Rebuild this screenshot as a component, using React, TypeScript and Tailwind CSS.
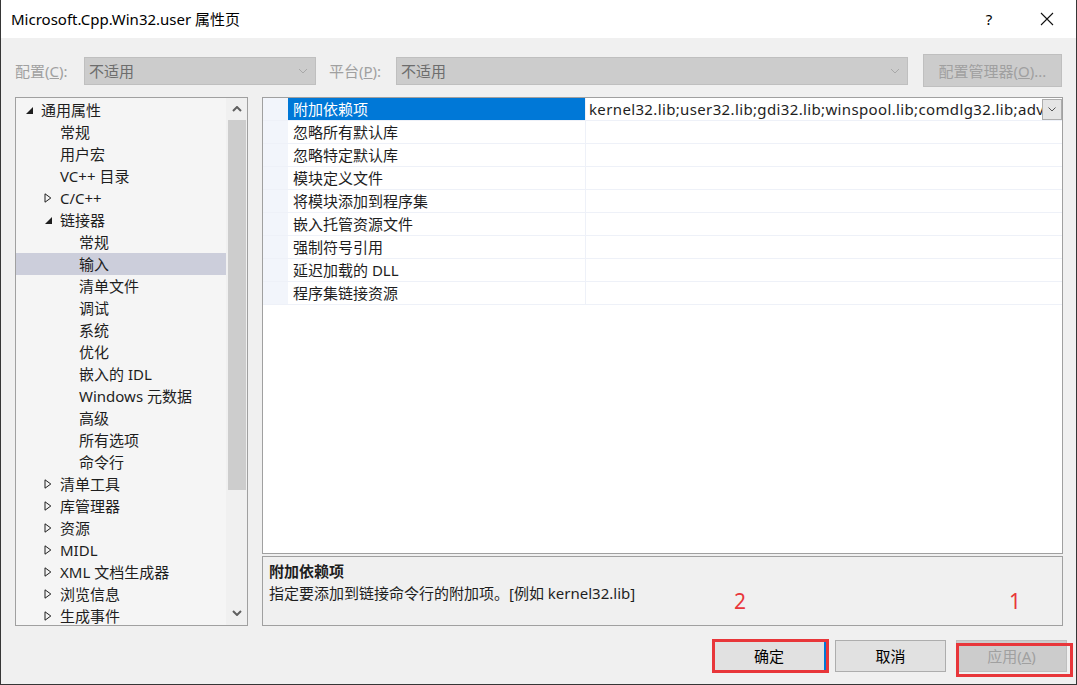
import React from "react";

type TreeItem = { label: string; level: number; arrow?: "open" | "closed"; selected?: boolean };

const treeItems: TreeItem[] = [
  { label: "通用属性", level: 0, arrow: "open" },
  { label: "常规", level: 1 },
  { label: "用户宏", level: 1 },
  { label: "VC++ 目录", level: 1 },
  { label: "C/C++", level: 1, arrow: "closed" },
  { label: "链接器", level: 1, arrow: "open" },
  { label: "常规", level: 2 },
  { label: "输入", level: 2, selected: true },
  { label: "清单文件", level: 2 },
  { label: "调试", level: 2 },
  { label: "系统", level: 2 },
  { label: "优化", level: 2 },
  { label: "嵌入的 IDL", level: 2 },
  { label: "Windows 元数据", level: 2 },
  { label: "高级", level: 2 },
  { label: "所有选项", level: 2 },
  { label: "命令行", level: 2 },
  { label: "清单工具", level: 1, arrow: "closed" },
  { label: "库管理器", level: 1, arrow: "closed" },
  { label: "资源", level: 1, arrow: "closed" },
  { label: "MIDL", level: 1, arrow: "closed" },
  { label: "XML 文档生成器", level: 1, arrow: "closed" },
  { label: "浏览信息", level: 1, arrow: "closed" },
  { label: "生成事件", level: 1, arrow: "closed" },
];

const props = [
  "附加依赖项",
  "忽略所有默认库",
  "忽略特定默认库",
  "模块定义文件",
  "将模块添加到程序集",
  "嵌入托管资源文件",
  "强制符号引用",
  "延迟加载的 DLL",
  "程序集链接资源",
];

const indent = ["pl-[9px]", "pl-[28px]", "pl-[47px]"];

function Chevron({ up, color = "#a8a8a8" }: { up?: boolean; color?: string }) {
  return (
    <svg width="10" height="6" viewBox="0 0 10 6">
      <polyline
        points={up ? "1,5 5,1 9,5" : "1,1 5,5 9,1"}
        fill="none"
        stroke={color}
        strokeWidth={up ? 2 : 1}
      />
    </svg>
  );
}

function Arrow({ kind }: { kind?: "open" | "closed" }) {
  if (kind === "open")
    return (
      <svg width="9" height="9" viewBox="0 0 9 9">
        <polygon points="8,1 8,8 1,8" fill="#1e1e1e" />
      </svg>
    );
  if (kind === "closed")
    return (
      <svg width="8" height="10" viewBox="0 0 8 10">
        <polygon points="1,0.8 6.8,5 1,9.2" fill="none" stroke="#1e1e1e" strokeWidth="1" />
      </svg>
    );
  return null;
}

function Combo({ width }: { width: string }) {
  return (
    <div className={`${width} h-[28px] bg-[#cccccc] border border-[#bfbfbf] flex items-center pl-[4px] pr-[7px] justify-between`}>
      <span className="text-[#6d6d6d]">不适用</span>
      <Chevron />
    </div>
  );
}

export default function App() {
  return (
    <div className="relative w-[1077px] h-[685px] bg-[#f0f0f0] border-l border-r border-b border-[#363636] text-[15px] leading-[22px] text-[#1e1e1e] font-['Noto_Sans','Noto_Sans_CJK_SC',sans-serif] overflow-hidden">
      {/* title bar */}
      <div className="h-[38px] bg-white flex items-center justify-between pl-[10px] pr-[6px]">
        <span className="text-black">Microsoft.Cpp.Win32.user 属性页</span>
        <div className="flex items-center gap-[12px]">
          <span className="w-[46px] text-center text-black">?</span>
          <span className="w-[46px] flex justify-center">
            <svg width="14" height="14" viewBox="0 0 14 14">
              <path d="M1 1 L13 13 M13 1 L1 13" stroke="#111" strokeWidth="1.1" />
            </svg>
          </span>
        </div>
      </div>

      <div className="pl-[14px]">
        {/* config row */}
        <div className="mt-[16px] h-[33px] flex items-center text-[#a0a0a0]">
          <span className="w-[69px]">
            配置(<span className="underline">C</span>):
          </span>
          <Combo width="w-[232px]" />
          <span className="ml-[13px] w-[67px]">
            平台(<span className="underline">P</span>):
          </span>
          <Combo width="w-[512px]" />
          <div className="ml-[15px] w-[139px] h-[33px] bg-[#cccccc] border border-[#bfbfbf] flex items-center justify-center">
            配置管理器(<span className="underline">O</span>)...
          </div>
        </div>

        {/* panels */}
        <div className="mt-[10px] flex gap-[14px]">
          {/* tree */}
          <div className="w-[233px] h-[529px] border border-[#a0a0a0] bg-[#f5f5f5] flex">
            <div className="flex-1 pt-[1px] overflow-hidden">
              {treeItems.map((it, i) => (
                <div
                  key={i}
                  className={`h-[22px] flex items-center whitespace-nowrap ${indent[it.level]} ${it.selected ? "bg-[#cccedb]" : ""}`}
                >
                  <span className="w-[16px] flex items-center">
                    <Arrow kind={it.arrow} />
                  </span>
                  <span>{it.label}</span>
                </div>
              ))}
            </div>
            <div className="w-[21px] bg-[#f0f0f0] flex flex-col items-center">
              <div className="h-[22px] flex items-center justify-center">
                <Chevron up color="#606060" />
              </div>
              <div className="w-[18px] h-[370px] bg-[#cdcdcd]" />
              <div className="flex-1" />
              <div className="h-[24px] flex items-center justify-center">
                <svg width="10" height="6" viewBox="0 0 10 6">
                  <polyline points="1,1 5,5 9,1" fill="none" stroke="#606060" strokeWidth="2" />
                </svg>
              </div>
            </div>
          </div>

          {/* right column */}
          <div className="w-[801px] flex flex-col">
            <div className="h-[457px] border border-[#a0a0a0] bg-white">
              {props.map((p, i) => (
                <div key={p} className="h-[23px] flex border-b border-[#eef1f8]">
                  <div className="w-[25px] bg-[#f2f5fb]" />
                  <div
                    className={`w-[298px] pl-[5px] border-r border-[#eef1f8] whitespace-nowrap ${i === 0 ? "bg-[#0078d7] text-white" : ""}`}
                  >
                    {p}
                  </div>
                  <div className="flex-1 flex min-w-0 pl-[3px]">
                    {i === 0 && (
                      <>
                        <span className="flex-1 min-w-0 whitespace-nowrap tracking-[0.36px]">
                          kernel32.lib;user32.lib;gdi32.lib;winspool.lib;comdlg32.lib;adv
                        </span>
                        <span className="w-[20px] h-[21px] mt-[1px] bg-[#e5e5e5] border border-[#adadad] flex items-center justify-center">
                          <svg width="8" height="5" viewBox="0 0 8 5">
                            <polyline points="0.5,0.5 4,4 7.5,0.5" fill="none" stroke="#555" strokeWidth="1" />
                          </svg>
                        </span>
                      </>
                    )}
                  </div>
                </div>
              ))}
            </div>
            <div className="mt-[2px] h-[70px] border border-[#a0a0a0] bg-[#f0f0f0] px-[6px] pt-[3px]">
              <div className="font-bold">附加依赖项</div>
              <div>指定要添加到链接命令行的附加项。[例如 kernel32.lib]</div>
            </div>
          </div>
        </div>
      </div>

      {/* buttons */}
      <div className="mt-[14px] flex justify-end pr-[9px]">
        <button className="w-[114px] h-[32px] bg-[#e1e1e1] border-2 border-[#0078d7] text-black">确定</button>
        <button className="ml-[9px] w-[111px] h-[32px] bg-[#e1e1e1] border border-[#adadad] text-black">取消</button>
        <button className="ml-[10px] w-[111px] h-[32px] bg-[#cccccc] border border-[#bfbfbf] text-[#a0a0a0]">
          应用(<span className="underline">A</span>)
        </button>
      </div>

      {/* red annotations */}
      <div className="absolute left-[711px] top-[639px] w-[117px] h-[34px] border-[3px] border-[#e8363a]" />
      <div className="absolute left-[955px] top-[643px] w-[117px] h-[34px] border-[3px] border-[#e8363a]" />
      <span className="absolute left-[733px] top-[590px] text-[21px] text-[#e8363a]">2</span>
      <span className="absolute left-[1008px] top-[590px] text-[21px] text-[#e8363a]">1</span>
    </div>
  );
}
